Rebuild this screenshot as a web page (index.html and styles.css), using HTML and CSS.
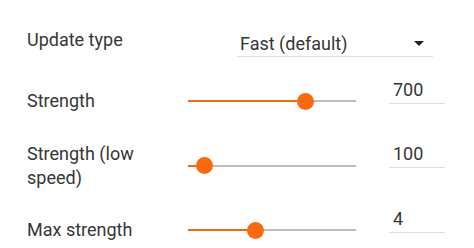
FILE: index.html
```html
<!DOCTYPE html>
<html>
<head>
<meta charset="utf-8">
<link rel="stylesheet" href="styles.css">
</head>
<body>
<div class="settings">
  <div class="row row-select">
    <div class="label">Update type</div>
    <div class="select">
      <span class="select-text">Fast (default)</span>
      <svg class="caret" width="10" height="5" viewBox="0 0 10 5"><path d="M0 0 L10 0 L5 5 Z" fill="#222"/></svg>
    </div>
  </div>
  <div class="row">
    <div class="label">Strength</div>
    <div class="slider"><div class="track"><div class="fill" style="width:70%"></div><div class="thumb" style="left:70%"></div></div></div>
    <div class="field"><div class="value">700</div></div>
  </div>
  <div class="row row-tall">
    <div class="label">Strength (low<br>speed)</div>
    <div class="slider"><div class="track"><div class="fill" style="width:10%"></div><div class="thumb" style="left:10%"></div></div></div>
    <div class="field"><div class="value">100</div></div>
  </div>
  <div class="row">
    <div class="label">Max strength</div>
    <div class="slider"><div class="track"><div class="fill" style="width:40%"></div><div class="thumb" style="left:40%"></div></div></div>
    <div class="field"><div class="value">4</div></div>
  </div>
</div>
</body>
</html>
```
FILE: styles.css
```css
html, body {
  margin: 0;
  padding: 0;
  background: #ffffff;
}
body {
  font-family: Roboto, "Liberation Sans", sans-serif;
  font-size: 18px;
  color: #363636;
}
.settings {
  padding: 11px 0 0 27px;
  height: 248px;
  box-sizing: border-box;
  overflow: hidden;
  display: flex;
  flex-direction: column;
}
.row {
  display: flex;
  align-items: center;
  flex: none;
  height: 64px;
}
.row-select {
  height: 58px;
}
.row-tall {
  height: 65px;
}
.label {
  width: 161px;
  line-height: 24px;
}
.row-select .label {
  width: 210px;
}
.select {
  width: 196px;
  height: 31px;
  box-sizing: border-box;
  display: flex;
  align-items: center;
  justify-content: space-between;
  padding: 6px 9px 0 3px;
  border-bottom: 1px solid #dddddd;
  margin-top: 2px;
}
.caret {
  display: block;
}
.slider {
  width: 168px;
}
.track {
  position: relative;
  height: 2px;
  background: #bdbdbd;
}
.fill {
  height: 2px;
  background: #f26a10;
}
.thumb {
  position: absolute;
  top: 1px;
  width: 17px;
  height: 17px;
  margin: -8.5px 0 0 -8.5px;
  border-radius: 50%;
  background: #fa6a0c;
}
.field {
  margin-left: 33px;
  width: 56px;
  padding-bottom: 18px;
}
.value {
  height: 22px;
  line-height: 18px;
  padding-left: 4px;
  border-bottom: 1px solid #dddddd;
}
```
